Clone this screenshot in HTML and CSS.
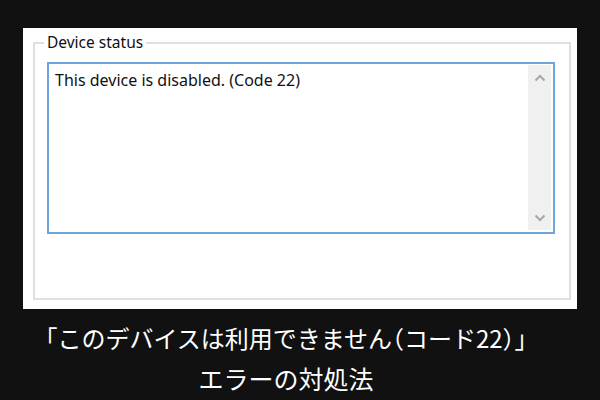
FILE: index.html
```html
<!DOCTYPE html>
<html lang="ja">
<head>
<meta charset="utf-8">
<title>Device status</title>
<link rel="stylesheet" href="styles.css">
</head>
<body>
<div class="panel">
  <div class="group">
    <span class="legend">Device status</span>
    <div class="textbox">
      <div class="content">This device is disabled. (Code 22)</div>
      <div class="scrollbar">
        <svg class="arrow" width="12" height="8" viewBox="0 0 12 8"><path d="M1.5 6.5 L6 2 L10.5 6.5" fill="none" stroke="#a6a6a6" stroke-width="2"/></svg>
        <svg class="arrow" width="12" height="8" viewBox="0 0 12 8"><path d="M1.5 1.5 L6 6 L10.5 1.5" fill="none" stroke="#a6a6a6" stroke-width="2"/></svg>
      </div>
    </div>
  </div>
</div>
<div class="caption">
  <div class="line1">「このデバイスは利用できません（コード22）」</div>
  <div class="line2">エラーの対処法</div>
</div>
</body>
</html>
```
FILE: styles.css
```css
html, body {
  margin: 0;
  padding: 0;
}
body {
  background: #111111;
  width: 600px;
  height: 400px;
  overflow: hidden;
  font-family: "Noto Sans", "Open Sans", sans-serif;
}
.panel {
  margin: 28px 23px 0 23px;
  height: 281px;
  box-sizing: border-box;
  background: #ffffff;
  padding: 14px 6px 9px 10px;
}
.group {
  position: relative;
  height: 100%;
  box-sizing: border-box;
  border: 2px solid #e0e0e0;
  padding: 18px 14px 64px 12px;
}
.legend {
  position: absolute;
  left: 9px;
  top: -12px;
  background: #ffffff;
  padding: 0 3px;
  font-size: 15.5px;
  line-height: 20px;
  color: #111;
}
.textbox {
  height: 100%;
  box-sizing: border-box;
  border: 2px solid #6ea5de;
  display: flex;
  padding: 1px 2px 2px 0;
}
.content {
  flex: 1;
  padding: 4px 0 0 6px;
  font-size: 16px;
  line-height: 22px;
  color: #111;
}
.scrollbar {
  width: 23px;
  background: #f0f0f0;
  display: flex;
  flex-direction: column;
  justify-content: space-between;
  align-items: center;
  padding: 9px 0 8px 0;
}
.arrow {
  display: block;
}
.caption {
  padding: 9px 28px 0 0;
  text-align: center;
  color: #ffffff;
  font-family: "Noto Sans CJK JP", "Noto Sans", sans-serif;
  font-weight: 400;
}
.line1 {
  font-size: 24px;
  line-height: 40px;
  font-feature-settings: "halt";
}
.line2 {
  font-size: 25px;
  line-height: 40px;
}
```
